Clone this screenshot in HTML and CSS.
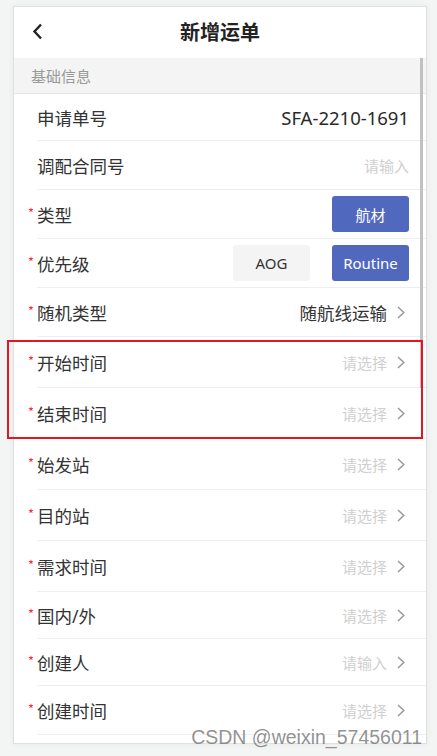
FILE: index.html
```html
<!DOCTYPE html>
<html lang="zh-CN">
<head>
  <meta charset="UTF-8" />
  <title>新增运单</title>
  <meta name="viewport" content="width=device-width, initial-scale=1.0" />
  <link rel="stylesheet" href="styles.css">
</head>
<body>

  <div class="card">
    <!-- top bar -->
    <header class="nav">
      <a class="back" href="#">
        <svg width="11" height="17" viewBox="0 0 11 17"><polyline points="9,1.5 2.5,8.5 9,15.5" fill="none" stroke="#222" stroke-width="2.4" stroke-linejoin="miter"/></svg>
      </a>
      <h1>新增运单</h1>
      <span></span>
    </header>

    <div class="section">基础信息</div>

    <ul class="form">
      <li class="row is-short">
        <span class="label">申请单号</span>
        <span class="value num">SFA-2210-1691</span>
      </li>
      <li class="row">
        <span class="label">调配合同号</span>
        <span class="hint">请输入</span>
      </li>
      <li class="row">
        <span class="label req">类型</span>
        <div class="btns">
          <span class="btn on">航材</span>
        </div>
      </li>
      <li class="row">
        <span class="label req">优先级</span>
        <div class="btns">
          <span class="btn">AOG</span>
          <span class="btn on">Routine</span>
        </div>
      </li>
      <li class="row">
        <span class="label req">随机类型</span>
        <span class="value">随航线运输</span>
        <svg class="arrow" viewBox="0 0 8 13"><polyline points="1,1 6.8,6.5 1,12" /></svg>
      </li>
      <li class="row is-tall">
        <span class="label req">开始时间</span>
        <span class="hint">请选择</span>
        <svg class="arrow" viewBox="0 0 8 13"><polyline points="1,1 6.8,6.5 1,12" /></svg>
      </li>
      <li class="row is-tall">
        <span class="label req">结束时间</span>
        <span class="hint">请选择</span>
        <svg class="arrow" viewBox="0 0 8 13"><polyline points="1,1 6.8,6.5 1,12" /></svg>
      </li>
      <li class="row is-tall">
        <span class="label req">始发站</span>
        <span class="hint">请选择</span>
        <svg class="arrow" viewBox="0 0 8 13"><polyline points="1,1 6.8,6.5 1,12" /></svg>
      </li>
      <li class="row is-tall">
        <span class="label req">目的站</span>
        <span class="hint">请选择</span>
        <svg class="arrow" viewBox="0 0 8 13"><polyline points="1,1 6.8,6.5 1,12" /></svg>
      </li>
      <li class="row is-tall">
        <span class="label req">需求时间</span>
        <span class="hint">请选择</span>
        <svg class="arrow" viewBox="0 0 8 13"><polyline points="1,1 6.8,6.5 1,12" /></svg>
      </li>
      <li class="row is-short">
        <span class="label req">国内/外</span>
        <span class="hint">请选择</span>
        <svg class="arrow" viewBox="0 0 8 13"><polyline points="1,1 6.8,6.5 1,12" /></svg>
      </li>
      <li class="row is-short">
        <span class="label req">创建人</span>
        <span class="hint">请输入</span>
        <svg class="arrow" viewBox="0 0 8 13"><polyline points="1,1 6.8,6.5 1,12" /></svg>
      </li>
      <li class="row">
        <span class="label req">创建时间</span>
        <span class="hint">请选择</span>
        <svg class="arrow" viewBox="0 0 8 13"><polyline points="1,1 6.8,6.5 1,12" /></svg>
      </li>
    </ul>

    <!-- scroll thumb -->
    <div class="thumb"></div>
  </div>

  <!-- annotation box -->
  <div class="mark"></div>
  <div class="watermark">CSDN @weixin_57456011</div>

</body>
</html>
```

FILE: styles.css
```css
* { box-sizing: border-box; margin: 0; padding: 0 }
html, body {
  width: 100%; height: 100%;
  overflow: hidden;
  background: #f3f4f4;
  font-family: "Noto Sans", "Noto Sans CJK SC", sans-serif;
  color: #333;
}
body {
  position: relative;
  padding: 6px 10px 0 13px;
}

/*–––– Card ––––*/
.card {
  position: relative;
  width: 414px; height: 738px;
  background: #fff;
  border: 1px solid #e0e0e0;
  box-shadow: 0 0 6px rgba(0,0,0,0.06);
  overflow: hidden;
}

/*–––– Top bar ––––*/
.nav {
  height: 51px;
  display: grid;
  grid-template-columns: 1fr auto 1fr;
  align-items: center;
}
.back {
  display: flex; align-items: center;
  padding-left: 18px;
  margin-top: -3px;
}
.nav h1 {
  font-size: 20px; font-weight: 700;
  color: #222;
  margin-top: -2px;
}

/*–––– Section title ––––*/
.section {
  height: 36px;
  display: flex; align-items: center;
  padding-left: 17px;
  background: #f4f4f4;
  border-bottom: 1px solid #e6e6e6;
  font-size: 15px; color: #999;
}

/*–––– Rows ––––*/
.form { list-style: none }
.row {
  display: flex; align-items: center;
  height: 49px;
  margin-left: 23px;
  padding-right: 17px;
  border-bottom: 1px solid #eee;
}
.row.is-tall  { height: 51px }
.row.is-short { height: 47px }

.label {
  position: relative;
  font-size: 17.5px;
  color: #333;
}
.label.req::before {
  content: '*';
  position: absolute; left: -9px; top: 1px;
  font-family: "Noto Sans CJK SC", sans-serif;
  font-size: 13px;
  color: #f2303a;
}
.value {
  margin-left: auto;
  font-size: 17.5px;
  color: #333;
}
.value.num { font-size: 18.5px; color: #2a2a2a }
.hint {
  margin-left: auto;
  font-size: 15px;
  color: #cfcfcf;
}
.arrow {
  width: 8px; height: 13px;
  margin: 0 4px 0 10px;
  fill: none; stroke: #999; stroke-width: 1.5;
}

/*–––– Option buttons ––––*/
.btns {
  margin-left: auto;
  display: flex; gap: 22px;
}
.btn {
  width: 77px; height: 36px;
  display: flex; align-items: center; justify-content: center;
  border-radius: 3px;
  background: #f4f4f4;
  font-size: 15px; color: #333;
}
.btn.on { background: #5069be; color: #fff }

/*–––– Scroll thumb ––––*/
.thumb {
  position: absolute; top: 51px; right: 3px;
  width: 3px; height: 330px;
  background: #c1c1c1;
}

/*–––– Overlays ––––*/
.mark {
  position: absolute; left: 7px; top: 340px;
  width: 416px; height: 99px;
  border: 2px solid #e5161f;
}
.watermark {
  position: absolute; right: 15px; top: 728px;
  font-family: "Liberation Sans", Arial, sans-serif;
  font-size: 19.5px; line-height: 1;
  color: rgba(110,110,110,0.75);
  white-space: nowrap;
}
```
